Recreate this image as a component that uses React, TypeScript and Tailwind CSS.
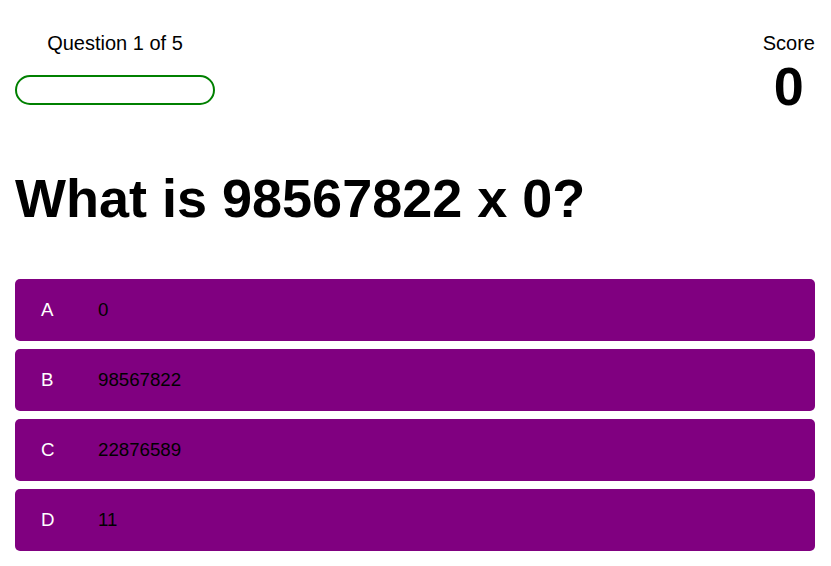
const answers = [
    { letter: 'A', text: '0' },
    { letter: 'B', text: '98567822' },
    { letter: 'C', text: '22876589' },
    { letter: 'D', text: '11' },
];

export default function App() {
    const current = 1;
    const total = 5;
    const score = 0;

    return (
        <div className="min-h-screen bg-white pl-[15px] pr-[16px] pt-[32px] text-black" style={{ fontFamily: '"Liberation Sans", Arial, sans-serif' }}>
            {/* Header */}
            <div className="flex justify-between items-start">
                <div className="w-[200px] flex flex-col items-center">
                    <div className="text-[20px] leading-[23px]">Question {current} of {total}</div>
                    <div className="mt-[19.5px] w-full h-[30px] rounded-full border-2 border-[#008000]"></div>
                </div>
                <div className="flex flex-col items-center">
                    <div className="text-[20px] leading-[23px]">Score</div>
                    <div className="text-[54px] leading-[62px] font-bold">{score}</div>
                </div>
            </div>

            {/* Question */}
            <h1 className="mt-[50px] text-[54px] leading-[62px] font-bold">What is 98567822 x 0?</h1>

            {/* Answers */}
            <div className="mt-[50px] flex flex-col gap-[8px]">
                {answers.map((a) => (
                    <button key={a.letter} className="h-[62px] w-full rounded-[5px] bg-[#800080] flex items-center pl-[26px] text-left text-[18.7px] leading-[22px]">
                        <span className="w-[57px] text-white">{a.letter}</span>
                        <span className="text-black">{a.text}</span>
                    </button>
                ))}
            </div>
        </div>
    );
}
